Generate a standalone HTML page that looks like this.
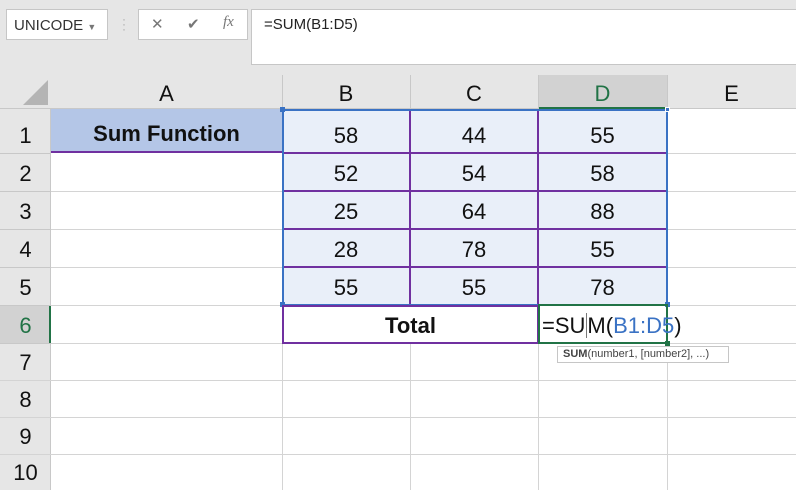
<!DOCTYPE html><html><head><style>
body{margin:0;width:796px;height:490px;overflow:hidden;background:#e6e6e6;font-family:"Liberation Sans",sans-serif;position:relative}
.a{position:absolute;box-sizing:border-box}
.c{display:flex;align-items:center;justify-content:center}
.hl{position:absolute;height:1px;background:#d4d4d4}
.vl{position:absolute;width:1px;background:#d4d4d4}
.n{position:absolute;font-size:22px;color:#111;text-align:center}
</style></head><body>
<div class="a" style="left:6px;top:9px;width:102px;height:31px;background:#fff;border:1px solid #c6c6c6;font-size:15px;color:#333;padding:7px 0 0 7px">UNICODE <span style="font-size:9px;color:#777">▼</span></div>
<div class="a" style="left:122px;top:17px;color:#aaa;font-size:12px;line-height:5px">·<br>·<br>·</div>
<div class="a" style="left:138px;top:9px;width:110px;height:31px;background:#fff;border:1px solid #c6c6c6;color:#777;font-size:15px">
<span class="a" style="left:12px;top:5px">✕</span><span class="a" style="left:48px;top:5px">✔</span><span class="a" style="left:84px;top:4px;font-style:italic;font-family:'Liberation Serif',serif">fx</span></div>
<div class="a" style="left:251px;top:9px;width:560px;height:56px;background:#fff;border:1px solid #c6c6c6;font-size:15px;color:#222;padding:6px 0 0 12px">=SUM(B1:D5)</div>
<div class="a" style="left:0;top:75px;width:796px;height:415px;background:#fff"></div>
<div class="a" style="left:0;top:75px;width:796px;height:34px;background:#e6e6e6;border-bottom:1px solid #c8c8c8"></div>
<div class="a" style="left:0;top:109px;width:51px;height:381px;background:#e6e6e6;border-right:1px solid #c8c8c8"></div>
<svg class="a" style="left:20px;top:80px" width="29" height="26"><polygon points="28,0 28,25 3,25" fill="#b4b4b4"/></svg>
<div class="a c" style="left:538px;top:75px;width:129px;height:34px;background:#d2d2d2;border-bottom:2px solid #217346"></div>
<div class="a c" style="left:0;top:305px;width:51px;height:38px;background:#d2d2d2;border-right:2px solid #217346"></div>
<div class="n" style="left:51px;top:81px;width:231px">A</div><div class="n" style="left:282px;top:81px;width:128px">B</div><div class="n" style="left:410px;top:81px;width:128px">C</div><div class="n" style="left:538px;top:81px;width:129px;color:#217346">D</div><div class="n" style="left:667px;top:81px;width:129px">E</div>
<div class="vl" style="left:282px;top:75px;height:34px;background:#c8c8c8"></div><div class="vl" style="left:410px;top:75px;height:34px;background:#c8c8c8"></div><div class="vl" style="left:538px;top:75px;height:34px;background:#c8c8c8"></div><div class="vl" style="left:667px;top:75px;height:34px;background:#c8c8c8"></div>
<div class="a" style="left:51px;top:109px;width:231px;height:44px;background:#b4c6e7"></div>
<div class="a" style="left:283px;top:109px;width:384px;height:196px;background:#e9eff9"></div>
<div class="vl" style="left:282px;top:109px;height:381px"></div><div class="vl" style="left:410px;top:305px;height:185px"></div><div class="vl" style="left:538px;top:109px;height:381px"></div><div class="vl" style="left:667px;top:109px;height:381px"></div>
<div class="hl" style="left:51px;top:191px;width:745px"></div><div class="hl" style="left:51px;top:229px;width:745px"></div><div class="hl" style="left:51px;top:267px;width:745px"></div><div class="hl" style="left:51px;top:305px;width:745px"></div><div class="hl" style="left:51px;top:343px;width:745px"></div><div class="hl" style="left:0;top:380px;width:796px"></div><div class="hl" style="left:0;top:417px;width:796px"></div><div class="hl" style="left:0;top:454px;width:796px"></div><div class="hl" style="left:667px;top:153px;width:129px"></div><div class="hl" style="left:0;top:153px;width:51px;background:#c8c8c8"></div>
<div class="hl" style="left:0;top:191px;width:51px;background:#c8c8c8"></div><div class="hl" style="left:0;top:229px;width:51px;background:#c8c8c8"></div><div class="hl" style="left:0;top:267px;width:51px;background:#c8c8c8"></div><div class="hl" style="left:0;top:305px;width:51px;background:#c8c8c8"></div><div class="hl" style="left:0;top:343px;width:51px;background:#c8c8c8"></div>
<div class="a" style="left:51px;top:151px;width:231px;height:2px;background:#7030a0"></div>
<div class="a" style="left:283px;top:152px;width:384px;height:2px;background:#7030a0"></div><div class="a" style="left:283px;top:190px;width:384px;height:2px;background:#7030a0"></div><div class="a" style="left:283px;top:228px;width:384px;height:2px;background:#7030a0"></div><div class="a" style="left:283px;top:266px;width:384px;height:2px;background:#7030a0"></div>
<div class="a" style="left:409px;top:109px;width:2px;height:196px;background:#7030a0"></div><div class="a" style="left:537px;top:109px;width:2px;height:196px;background:#7030a0"></div>
<div class="a" style="left:282px;top:109px;width:386px;height:197px;border:2px solid #3a72c4"></div>
<div class="a" style="left:280px;top:107px;width:5px;height:5px;background:#3a72c4"></div><div class="a" style="left:665px;top:107px;width:5px;height:5px;background:#3a72c4;border:1px solid #fff"></div><div class="a" style="left:280px;top:302px;width:5px;height:5px;background:#3a72c4"></div><div class="a" style="left:665px;top:302px;width:5px;height:5px;background:#3a72c4"></div>
<div class="a" style="left:282px;top:305px;width:257px;height:39px;border:2px solid #7030a0;background:#fff"></div>
<div class="a" style="left:538px;top:304px;width:130px;height:40px;border:2px solid #217346"></div>
<div class="a" style="left:665px;top:341px;width:5px;height:5px;background:#217346"></div>
<div class="n" style="left:51px;top:121px;width:231px;font-weight:bold">Sum Function</div>
<div class="n" style="left:282px;top:313px;width:257px;font-weight:bold">Total</div>
<div class="n" style="left:542px;top:313px;text-align:left">=SU<span style="border-left:1px solid #777;margin-left:1px"></span>M(<span style="color:#3a72c4">B1:D5</span>)</div>
<div class="a" style="left:557px;top:346px;width:172px;height:17px;background:#fff;border:1px solid #c6c6c6;font-size:11px;color:#444;padding:1px 0 0 5px;white-space:nowrap"><b>SUM</b>(number1, [number2], ...)</div>
<div class="n" style="left:282px;top:123px;width:128px">58</div><div class="n" style="left:410px;top:123px;width:128px">44</div><div class="n" style="left:538px;top:123px;width:129px">55</div>
<div class="n" style="left:282px;top:161px;width:128px">52</div><div class="n" style="left:410px;top:161px;width:128px">54</div><div class="n" style="left:538px;top:161px;width:129px">58</div>
<div class="n" style="left:282px;top:199px;width:128px">25</div><div class="n" style="left:410px;top:199px;width:128px">64</div><div class="n" style="left:538px;top:199px;width:129px">88</div>
<div class="n" style="left:282px;top:237px;width:128px">28</div><div class="n" style="left:410px;top:237px;width:128px">78</div><div class="n" style="left:538px;top:237px;width:129px">55</div>
<div class="n" style="left:282px;top:275px;width:128px">55</div><div class="n" style="left:410px;top:275px;width:128px">55</div><div class="n" style="left:538px;top:275px;width:129px">78</div>
<div class="n" style="left:0;top:123px;width:51px">1</div><div class="n" style="left:0;top:161px;width:51px">2</div><div class="n" style="left:0;top:199px;width:51px">3</div><div class="n" style="left:0;top:237px;width:51px">4</div><div class="n" style="left:0;top:275px;width:51px">5</div><div class="n" style="left:0;top:313px;width:51px;color:#217346">6</div><div class="n" style="left:0;top:350px;width:51px">7</div><div class="n" style="left:0;top:387px;width:51px">8</div><div class="n" style="left:0;top:424px;width:51px">9</div><div class="n" style="left:0;top:460px;width:51px">10</div>
</body></html>
